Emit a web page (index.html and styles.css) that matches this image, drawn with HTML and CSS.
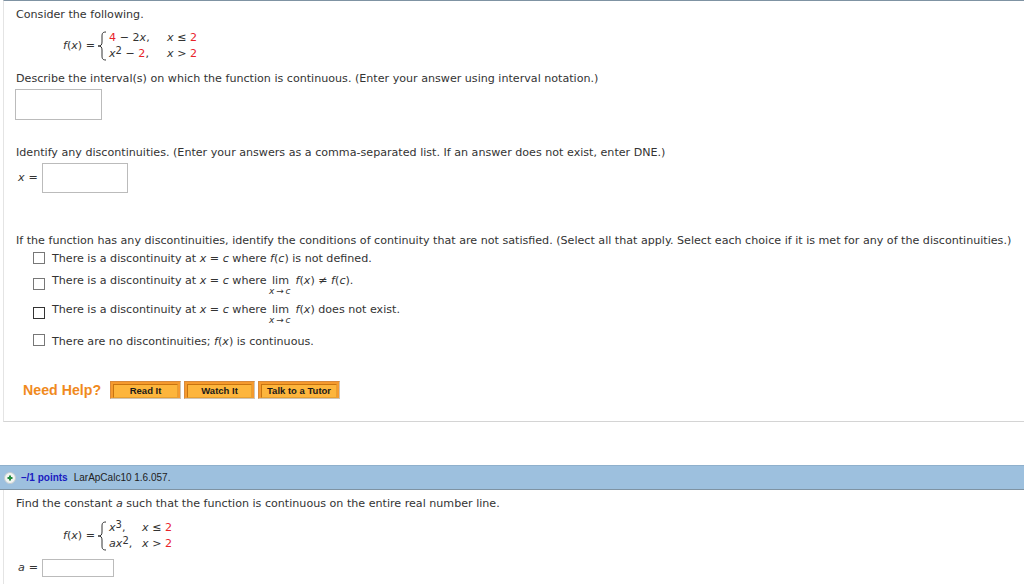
FILE: index.html
```html
<!DOCTYPE html>
<html lang="en">
<head>
    <meta charset="UTF-8">
    <meta name="viewport" content="width=device-width, initial-scale=1.0">
    <title>Continuity Questions</title>
    <link rel="stylesheet" href="styles.css">
</head>
<body>
    <div class="question-panel">
        <p class="line first-line">Consider the following.</p>
        <div class="piecewise first-fn">
            <span class="fn-name"><i>f</i>(<i>x</i>) =</span>
            <svg class="brace" width="13" height="30" viewBox="0 0 13 30"><path d="M10 1 C6 1 6 3 6 6 L6 11 C6 14 5 15 2 15 C5 15 6 16 6 19 L6 24 C6 27 6 29 10 29" fill="none" stroke="#333" stroke-width="1"/></svg>
            <div class="cases">
                <span><b class="red">4</b> &minus; 2<i>x</i>,</span><span><i>x</i> &le; <b class="red">2</b></span>
                <span><i>x</i><sup>2</sup> &minus; <b class="red">2</b>,</span><span><i>x</i> &gt; <b class="red">2</b></span>
            </div>
        </div>
        <p class="line describe">Describe the interval(s) on which the function is continuous. (Enter your answer using interval notation.)</p>
        <div class="answer-box wide"></div>
        <p class="line identify">Identify any discontinuities. (Enter your answers as a comma-separated list. If an answer does not exist, enter DNE.)</p>
        <div class="answer-row x-row"><i>x</i> = <span class="answer-box"></span></div>
        <p class="line conditions">If the function has any discontinuities, identify the conditions of continuity that are not satisfied. (Select all that apply. Select each choice if it is met for any of the discontinuities.)</p>
        <ul class="choices">
            <li class="choice choice-one"><span class="check"></span><span>There is a discontinuity at <i>x</i> = <i>c</i> where <i>f</i>(<i>c</i>) is not defined.</span></li>
            <li class="choice choice-lim"><span class="check low"></span><span>There is a discontinuity at <i>x</i> = <i>c</i> where <span class="lim">lim<small><i>x</i> &rarr; <i>c</i></small></span> <i>f</i>(<i>x</i>) &ne; <i>f</i>(<i>c</i>).</span></li>
            <li class="choice choice-lim"><span class="check low dark"></span><span>There is a discontinuity at <i>x</i> = <i>c</i> where <span class="lim">lim<small><i>x</i> &rarr; <i>c</i></small></span> <i>f</i>(<i>x</i>) does not exist.</span></li>
            <li class="choice choice-last"><span class="check high"></span><span>There are no discontinuities; <i>f</i>(<i>x</i>) is continuous.</span></li>
        </ul>
        <div class="help-row">
            <span class="need-help">Need Help?</span>
            <span class="help-btn read"><span>Read It</span></span>
            <span class="help-btn watch"><span>Watch It</span></span>
            <span class="help-btn tutor"><span>Talk to a Tutor</span></span>
        </div>
    </div>

    <div class="question-bar">
        <svg class="plus" width="12" height="12" viewBox="0 0 12 12"><circle cx="6" cy="6" r="5.5" fill="#f2f4f2" stroke="#c4ccd0"/><path d="M3.5 6 H8.5 M6 3.5 V8.5" stroke="#1f8a3a" stroke-width="2"/></svg>
        <b class="points">&ndash;/1 points</b>
        <span class="ref">LarApCalc10 1.6.057.</span>
    </div>

    <div class="question-panel last-panel">
        <p class="line find">Find the constant <i>a</i> such that the function is continuous on the entire real number line.</p>
        <div class="piecewise second-fn">
            <span class="fn-name"><i>f</i>(<i>x</i>) =</span>
            <svg class="brace" width="13" height="30" viewBox="0 0 13 30"><path d="M10 1 C6 1 6 3 6 6 L6 11 C6 14 5 15 2 15 C5 15 6 16 6 19 L6 24 C6 27 6 29 10 29" fill="none" stroke="#333" stroke-width="1"/></svg>
            <div class="cases tight">
                <span><i>x</i><sup>3</sup>,</span><span><i>x</i> &le; <b class="red">2</b></span>
                <span><i>ax</i><sup>2</sup>,</span><span><i>x</i> &gt; <b class="red">2</b></span>
            </div>
        </div>
        <div class="answer-row a-row"><i>a</i> = <span class="answer-box short"></span></div>
    </div>
</body>
</html>
```

FILE: styles.css
```css
html, body {
    height: 584px;
    overflow: hidden;
}
body {
    margin: 0;
    font-family: "DejaVu Sans", Verdana, sans-serif;
    font-size: 11.11px;
    line-height: 14px;
    color: #333;
    background-color: #fff;
}
.question-panel {
    margin-left: 3px;
    padding-left: 12px;
    height: 420px;
    border-top: 1px solid #7f93a3;
    border-left: 1px solid #e4e4e4;
    border-bottom: 1px solid #d4d4d4;
    box-sizing: content-box;
}
.line {
    margin: 0;
}
.first-line {
    padding-top: 7px;
}
.piecewise {
    display: flex;
    align-items: center;
}
.first-fn {
    margin-top: 9px;
    margin-left: 47px;
}
.fn-name {
    margin-right: 1px;
}
.brace {
    flex: none;
}
.cases {
    display: grid;
    grid-template-columns: 58px auto;
    row-gap: 2px;
}
.cases.tight {
    grid-template-columns: 33px auto;
}
sup {
    font-size: 10px;
    line-height: 0;
    vertical-align: 3px;
}
.red {
    color: #e8232a;
    font-weight: normal;
}
.describe {
    margin-top: 11px;
}
.answer-box {
    display: inline-block;
    width: 86px;
    height: 30px;
    border: 1px solid #bbb;
    box-sizing: border-box;
    background-color: #fff;
    vertical-align: middle;
}
.answer-box.wide {
    display: block;
    width: 87px;
    height: 31px;
    margin-top: 3px;
    margin-left: -1px;
}
.identify {
    margin-top: 26px;
}
.answer-row {
    display: flex;
    align-items: center;
    gap: 4px;
}
.x-row {
    margin-top: 3px;
    padding-left: 2px;
}
.conditions {
    margin-top: 41px;
}
.choices {
    list-style: none;
    margin: 0;
    padding: 0 0 0 17px;
}
.choice {
    display: flex;
    gap: 7px;
    align-items: flex-start;
}
.choice-one {
    margin-top: 4px;
    height: 22px;
}
.choice-lim {
    height: 29px;
}
.choice-last {
    margin-top: 3px;
}
.check {
    flex: none;
    width: 12px;
    height: 12px;
    box-sizing: border-box;
    border: 1px solid #777;
    background-color: #fff;
}
.check.low {
    margin-top: 4px;
}
.check.dark {
    border-color: #333;
}
.check.high {
    margin-top: -1px;
}
.lim {
    position: relative;
    display: inline-block;
    margin-left: 2px;
    margin-right: 3px;
}
.lim small {
    position: absolute;
    left: -3px;
    top: 10px;
    font-size: 9px;
    white-space: nowrap;
    word-spacing: -1px;
}
.help-row {
    display: flex;
    align-items: center;
    gap: 3px;
    margin-top: 32px;
    padding-left: 7px;
}
.need-help {
    font-family: "Liberation Sans", Arial, sans-serif;
    font-size: 14.2px;
    font-weight: bold;
    color: #f08a1d;
    margin-right: 6px;
}
.help-btn {
    display: block;
    height: 18px;
    padding: 2px;
    box-sizing: border-box;
    background-color: #f59a2e;
    border: 1px solid;
    border-color: #d8893a #cfc4b4 #cfc4b4 #d8893a;
}
.help-btn span {
    display: block;
    height: 12px;
    border: 1px solid #e8a030;
    border-top-color: #c87410;
    border-left-color: #c87410;
    background-color: #fdb53c;
    font-family: "Liberation Sans", Arial, sans-serif;
    font-size: 9.5px;
    line-height: 11px;
    font-weight: bold;
    color: #1a1a1a;
    text-align: center;
    box-sizing: content-box;
}
.help-btn.read { width: 71px; }
.help-btn.watch { width: 71px; }
.help-btn.tutor { width: 82px; }
.question-bar {
    display: flex;
    align-items: center;
    height: 25px;
    margin-top: 43px;
    box-sizing: border-box;
    border-top: 1px solid #8fb0cc;
    border-bottom: 1px solid #7f93a3;
    background-color: #9dc0de;
    font-family: "Liberation Sans", Arial, sans-serif;
    font-size: 10px;
    color: #222;
    padding-left: 4px;
}
.points {
    color: #1a1ac0;
    margin-left: 5px;
    margin-right: 6px;
}
.last-panel {
    border-top: none;
    border-bottom: none;
    height: 95px;
}
.find {
    padding-top: 7px;
}
.second-fn {
    margin-top: 10px;
    margin-left: 47px;
}
.a-row {
    margin-top: 8px;
    padding-left: 2px;
}
.answer-box.short {
    width: 72px;
    height: 18px;
}
```
